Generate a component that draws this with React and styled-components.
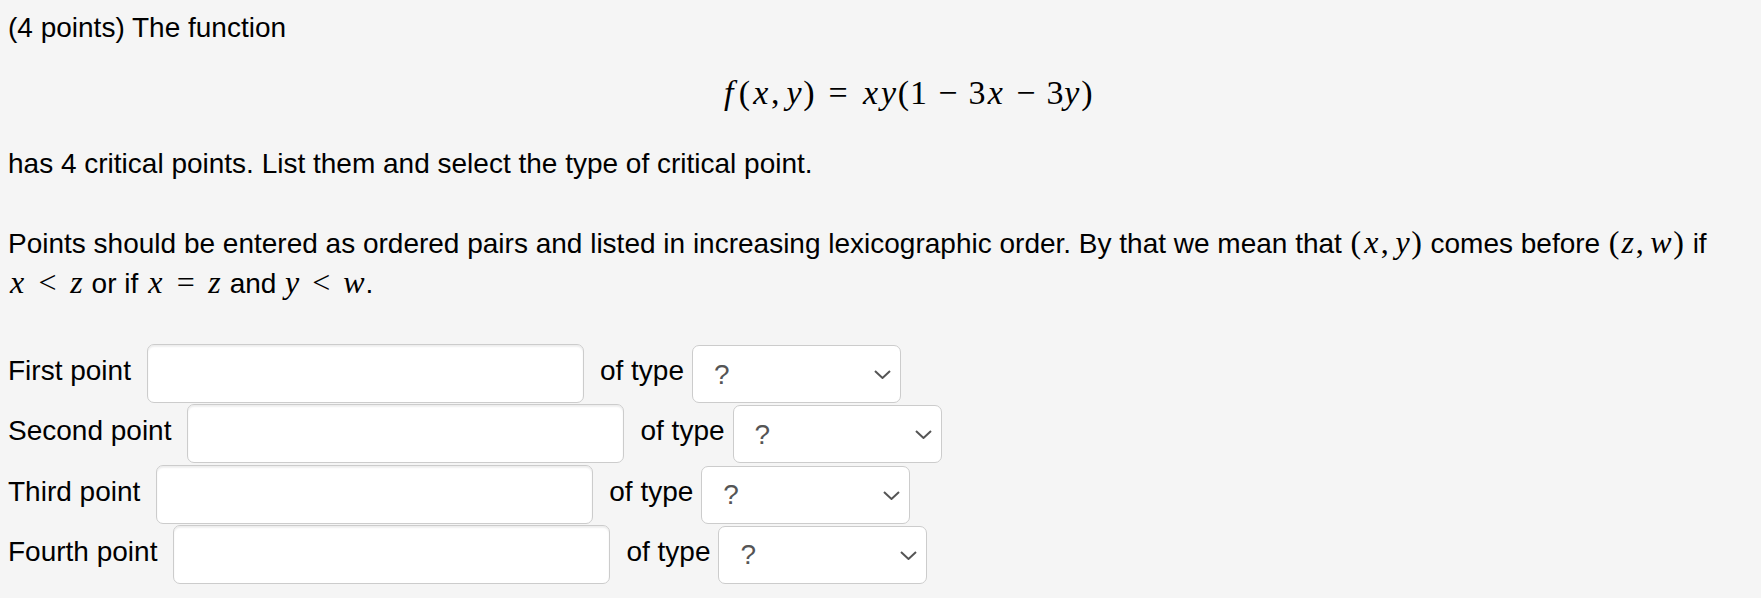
import React from "react";
import styled, { createGlobalStyle } from "styled-components";

const GlobalStyle = createGlobalStyle`
  html, body { background: #f5f5f5; }
  body {
    margin: 8px;
    font-family: "Liberation Sans", Arial, sans-serif;
    font-size: 28px;
    line-height: 40px;
    color: #000;
  }
  * { box-sizing: border-box; }
`;

const Page = styled.div`
  display: flex;
  flex-direction: column;
`;

const Line = styled.p`
  margin: 0 0 ${(p) => p.$after || 0}px 0;
`;

const Display = styled.div`
  height: 96px;
  line-height: 90px;
  text-align: center;
  padding-left: 52px;
  font-family: "Liberation Serif", "Times New Roman", serif;
  font-size: 34px;
  white-space: nowrap;
`;

const InlineMath = styled.span`
  font-family: "Liberation Serif", "Times New Roman", serif;
  font-size: 32px;
  line-height: 1;
  white-space: nowrap;
`;

const MiSpan = styled.span`
  font-style: italic;
  padding: 0 ${(p) => p.$pad}em;
`;

const MoSpan = styled.span`
  padding: 0 ${(p) => p.$pad}em;
  margin: ${(p) =>
    p.$kind === "rel"
      ? "0 0.278em"
      : p.$kind === "bin"
      ? "0 0.222em"
      : p.$kind === "punct"
      ? "0 0.167em 0 0"
      : "0"};
`;

const MI_PAD = { f: 0.13, x: 0.064, y: 0.023, z: 0.038, w: 0.025 };
const MO_PAD = { "(": 0.028, ")": 0.028, "=": 0.107, "−": 0.107, "<": 0.107, ",": 0.014 };

const Mi = ({ c }) => <MiSpan $pad={MI_PAD[c] ?? 0.03}>{c}</MiSpan>;
const Mo = ({ c, kind }) => (
  <MoSpan $pad={MO_PAD[c] ?? 0} $kind={kind}>
    {c}
  </MoSpan>
);
const Mn = ({ c }) => <span>{c}</span>;

const Rows = styled.div`
  display: flex;
  flex-direction: column;
  gap: 1.3px;
`;

const Row = styled.div`
  display: flex;
  align-items: flex-start;
  white-space: nowrap;
`;

const Label = styled.span`
  margin-top: 7px;
  margin-right: ${(p) => p.$gap}px;
`;

const TextInput = styled.input`
  width: 437px;
  height: 59px;
  margin: 0 16px 0 0;
  padding: 10px 21px;
  border: 1.75px solid #cccccc;
  border-radius: 7px;
  background: #fff;
  box-shadow: inset 0 1.75px 1.75px rgba(0, 0, 0, 0.075);
  font: inherit;
  outline: none;
`;

const SelectWrap = styled.div`
  position: relative;
  margin-top: 1px;
  width: 209px;
  height: 58px;
`;

const Select = styled.select`
  appearance: none;
  -webkit-appearance: none;
  width: 100%;
  height: 100%;
  padding: 0 40px 0 21px;
  border: 1.75px solid #cccccc;
  border-radius: 7px;
  background: #fff;
  color: #555;
  font-family: "Liberation Sans", Arial, sans-serif;
  font-size: 28px;
  outline: none;
`;

const Chevron = styled.svg`
  position: absolute;
  right: 10px;
  top: 25px;
  width: 17px;
  height: 9px;
  pointer-events: none;
`;

const points = [
  { label: "First point", gap: 16 },
  { label: "Second point", gap: 16 },
  { label: "Third point", gap: 16 },
  { label: "Fourth point", gap: 16 },
];

export default function App() {
  return (
    <>
      <GlobalStyle />
      <Page>
        <Line>(4 points) The function</Line>
        <Display>
          <Mi c="f" />
          <Mo c="(" />
          <Mi c="x" />
          <Mo c="," kind="punct" />
          <Mi c="y" />
          <Mo c=")" />
          <Mo c="=" kind="rel" />
          <Mi c="x" />
          <Mi c="y" />
          <Mo c="(" />
          <Mn c="1" />
          <Mo c="−" kind="bin" />
          <Mn c="3" />
          <Mi c="x" />
          <Mo c="−" kind="bin" />
          <Mn c="3" />
          <Mi c="y" />
          <Mo c=")" />
        </Display>
        <Line $after={40}>
          has 4 critical points. List them and select the type of critical point.
        </Line>
        <Line $after={40}>
          Points should be entered as ordered pairs and listed in increasing
          lexicographic order. By that we mean that{" "}
          <InlineMath>
            <Mo c="(" />
            <Mi c="x" />
            <Mo c="," kind="punct" />
            <Mi c="y" />
            <Mo c=")" />
          </InlineMath>{" "}
          comes before{" "}
          <InlineMath>
            <Mo c="(" />
            <Mi c="z" />
            <Mo c="," kind="punct" />
            <Mi c="w" />
            <Mo c=")" />
          </InlineMath>{" "}
          if{" "}
          <InlineMath>
            <Mi c="x" />
            <Mo c="<" kind="rel" />
            <Mi c="z" />
          </InlineMath>{" "}
          or if{" "}
          <InlineMath>
            <Mi c="x" />
            <Mo c="=" kind="rel" />
            <Mi c="z" />
          </InlineMath>{" "}
          and{" "}
          <InlineMath>
            <Mi c="y" />
            <Mo c="<" kind="rel" />
            <Mi c="w" />
          </InlineMath>
          .
        </Line>
        <Rows>
          {points.map((p) => (
            <Row key={p.label}>
              <Label $gap={p.gap}>{p.label}</Label>
              <TextInput type="text" aria-label={p.label} />
              <Label $gap={8}>of type</Label>
              <SelectWrap>
                <Select defaultValue="?" aria-label={`${p.label} type`}>
                  <option value="?">?</option>
                  <option value="min">local minimum</option>
                  <option value="max">local maximum</option>
                  <option value="saddle">saddle point</option>
                </Select>
                <Chevron viewBox="0 0 17 9" fill="none">
                  <path d="M1 1 L8.5 8 L16 1" stroke="#555" strokeWidth="2" />
                </Chevron>
              </SelectWrap>
            </Row>
          ))}
        </Rows>
      </Page>
    </>
  );
}
